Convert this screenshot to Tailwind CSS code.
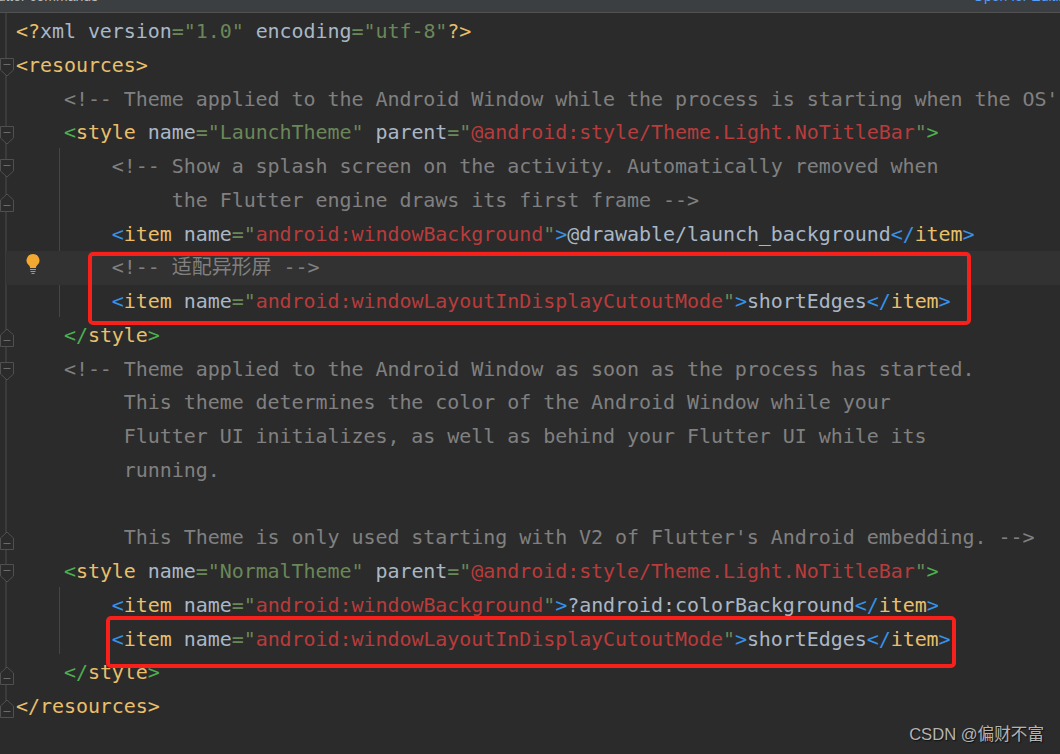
<!DOCTYPE html>
<html lang="en">
<head>
  <meta charset="UTF-8" />
  <title>styles.xml</title>
  <script src="https://cdn.jsdelivr.net/npm/@tailwindcss/browser@4"></script>
</head>
<body class="bg-[#2b2b2b] overflow-hidden">
  <svg class="hidden">
    <symbol id="fold-open" viewBox="0 0 14 19">
      <path d="M0.5 0.5H13.5V12L7 18L0.5 12Z" fill="#2b2b2b" stroke="#4f5052" />
      <path d="M3.5 6.5H10.5" stroke="#6a6b6d" />
    </symbol>
    <symbol id="fold-close" viewBox="0 0 14 19">
      <path d="M0.5 18.5H13.5V7L7 1L0.5 7Z" fill="#2b2b2b" stroke="#4f5052" />
      <path d="M3.5 12.5H10.5" stroke="#6a6b6d" />
    </symbol>
  </svg>

  <div class="relative h-[754px] w-[1060px] overflow-hidden">
    <!-- tool banner, cut off by the crop -->
    <div class="flex h-[13px] justify-between overflow-hidden border-b border-[#515151] bg-[#3c3f41] font-['Liberation_Sans',sans-serif] text-[14px] leading-[16px]">
      <span class="-mt-[12px] -ml-[14px] text-[#bbbbbb]">Flutter commands</span>
      <span class="-mt-[12px] w-[87px] whitespace-nowrap text-[#589df6]">Open for Editing</span>
    </div>

    <!-- fold gutter line + indent guides -->
    <div class="absolute top-[13px] left-[5px] h-[695px] w-[2px] bg-[#3a3b3d]"></div>
    <div class="absolute top-[148px] left-[59px] h-[169px] w-px bg-[#3d4a3d]"></div>
    <div class="absolute top-[587px] left-[59px] h-[67px] w-px bg-[#3d4a3d]"></div>

    <!-- editor -->
    <div class="relative flex flex-col pt-[2px] font-['DejaVu_Sans_Mono','Noto_Sans_CJK_SC',monospace] text-[20px] tracking-[-0.06px] whitespace-pre text-[#a9b7c6]">
      <div class="flex h-[33.75px] items-center leading-[33.75px]">
        <div class="w-4 shrink-0"></div>
        <div><span class="text-[#e8bf6a]">&lt;?</span>xml version<span class="text-[#6a8759]">="1.0"</span> encoding<span class="text-[#6a8759]">="utf-8"</span><span class="text-[#e8bf6a]">?&gt;</span></div>
      </div>
      <div class="flex h-[33.75px] items-center leading-[33.75px]">
        <div class="w-4 shrink-0"><svg class="mt-1 h-[19px] w-[14px]"><use href="#fold-open" /></svg></div>
        <div class="text-[#e8bf6a]">&lt;resources&gt;</div>
      </div>
      <div class="flex h-[33.75px] items-center leading-[33.75px]">
        <div class="w-4 shrink-0"></div>
        <div class="text-[#808080]">    &lt;!-- Theme applied to the Android Window while the process is starting when the OS'</div>
      </div>
      <div class="flex h-[33.75px] items-center leading-[33.75px]">
        <div class="w-4 shrink-0"><svg class="mt-1 h-[19px] w-[14px]"><use href="#fold-open" /></svg></div>
        <div>    <span class="text-[#4caf50]">&lt;</span><span class="text-[#e8bf6a]">style</span> name<span class="text-[#6a8759]">="LaunchTheme"</span> parent<span class="text-[#6a8759]">="</span><span class="text-[#b83c3c]">@android:style/Theme.Light.NoTitleBar</span><span class="text-[#6a8759]">"</span><span class="text-[#4caf50]">&gt;</span></div>
      </div>
      <div class="flex h-[33.75px] items-center leading-[33.75px]">
        <div class="w-4 shrink-0"><svg class="mt-1 h-[19px] w-[14px]"><use href="#fold-open" /></svg></div>
        <div class="text-[#808080]">        &lt;!-- Show a splash screen on the activity. Automatically removed when</div>
      </div>
      <div class="flex h-[33.75px] items-center leading-[33.75px]">
        <div class="w-4 shrink-0"><svg class="mt-1 h-[19px] w-[14px]"><use href="#fold-close" /></svg></div>
        <div class="text-[#808080]">             the Flutter engine draws its first frame --&gt;</div>
      </div>
      <div class="flex h-[33.75px] items-center leading-[33.75px]">
        <div class="w-4 shrink-0"></div>
        <div>        <span class="text-[#3592e8]">&lt;</span><span class="text-[#e8bf6a]">item</span> name<span class="text-[#6a8759]">="</span><span class="text-[#b83c3c]">android:windowBackground</span><span class="text-[#6a8759]">"</span><span class="text-[#3592e8]">&gt;</span>@drawable/launch_background<span class="text-[#3592e8]">&lt;/</span><span class="text-[#e8bf6a]">item</span><span class="text-[#3592e8]">&gt;</span></div>
      </div>
      <!-- caret line -->
      <div class="relative flex h-[33.75px] items-center leading-[33.75px]">
        <div class="w-[6px] shrink-0"></div>
        <div class="flex-1 bg-[#323232] pl-[10px] text-[#808080]">        &lt;!-- 适配异形屏 --&gt;</div>
        <svg class="absolute top-[2px] left-[26px] h-[22px] w-[14px]" viewBox="0 0 14 22">
          <path d="M7 1a6.5 6.5 0 0 0-4 11.6c.8.7 1 1.4 1 2.4h6c0-1 .2-1.7 1-2.4A6.5 6.5 0 0 0 7 1Z" fill="#f2a831" />
          <path d="M4 16.5h6M4.5 18.5h5M5.5 20.5h3" stroke="#9a9b9d" stroke-width="1.2" />
        </svg>
      </div>
      <div class="flex h-[33.75px] items-center leading-[33.75px]">
        <div class="w-4 shrink-0"></div>
        <div>        <span class="text-[#3592e8]">&lt;</span><span class="text-[#e8bf6a]">item</span> name<span class="text-[#6a8759]">="</span><span class="text-[#b83c3c]">android:windowLayoutInDisplayCutoutMode</span><span class="text-[#6a8759]">"</span><span class="text-[#3592e8]">&gt;</span>shortEdges<span class="text-[#3592e8]">&lt;/</span><span class="text-[#e8bf6a]">item</span><span class="text-[#3592e8]">&gt;</span></div>
      </div>
      <div class="flex h-[33.75px] items-center leading-[33.75px]">
        <div class="w-4 shrink-0"><svg class="mt-1 h-[19px] w-[14px]"><use href="#fold-close" /></svg></div>
        <div>    <span class="text-[#4caf50]">&lt;/</span><span class="text-[#e8bf6a]">style</span><span class="text-[#4caf50]">&gt;</span></div>
      </div>
      <div class="flex h-[33.75px] items-center leading-[33.75px]">
        <div class="w-4 shrink-0"><svg class="mt-1 h-[19px] w-[14px]"><use href="#fold-open" /></svg></div>
        <div class="text-[#808080]">    &lt;!-- Theme applied to the Android Window as soon as the process has started.</div>
      </div>
      <div class="flex h-[33.75px] items-center leading-[33.75px]">
        <div class="w-4 shrink-0"></div>
        <div class="text-[#808080]">         This theme determines the color of the Android Window while your</div>
      </div>
      <div class="flex h-[33.75px] items-center leading-[33.75px]">
        <div class="w-4 shrink-0"></div>
        <div class="text-[#808080]">         Flutter UI initializes, as well as behind your Flutter UI while its</div>
      </div>
      <div class="flex h-[33.75px] items-center leading-[33.75px]">
        <div class="w-4 shrink-0"></div>
        <div class="text-[#808080]">         running.</div>
      </div>
      <div class="h-[33.75px]"></div>
      <div class="flex h-[33.75px] items-center leading-[33.75px]">
        <div class="w-4 shrink-0"><svg class="mt-1 h-[19px] w-[14px]"><use href="#fold-close" /></svg></div>
        <div class="text-[#808080]">         This Theme is only used starting with V2 of Flutter's Android embedding. --&gt;</div>
      </div>
      <div class="flex h-[33.75px] items-center leading-[33.75px]">
        <div class="w-4 shrink-0"><svg class="mt-1 h-[19px] w-[14px]"><use href="#fold-open" /></svg></div>
        <div>    <span class="text-[#4caf50]">&lt;</span><span class="text-[#e8bf6a]">style</span> name<span class="text-[#6a8759]">="NormalTheme"</span> parent<span class="text-[#6a8759]">="</span><span class="text-[#b83c3c]">@android:style/Theme.Light.NoTitleBar</span><span class="text-[#6a8759]">"</span><span class="text-[#4caf50]">&gt;</span></div>
      </div>
      <div class="flex h-[33.75px] items-center leading-[33.75px]">
        <div class="w-4 shrink-0"></div>
        <div>        <span class="text-[#3592e8]">&lt;</span><span class="text-[#e8bf6a]">item</span> name<span class="text-[#6a8759]">="</span><span class="text-[#b83c3c]">android:windowBackground</span><span class="text-[#6a8759]">"</span><span class="text-[#3592e8]">&gt;</span>?android:colorBackground<span class="text-[#3592e8]">&lt;/</span><span class="text-[#e8bf6a]">item</span><span class="text-[#3592e8]">&gt;</span></div>
      </div>
      <div class="flex h-[33.75px] items-center leading-[33.75px]">
        <div class="w-4 shrink-0"></div>
        <div>        <span class="text-[#3592e8]">&lt;</span><span class="text-[#e8bf6a]">item</span> name<span class="text-[#6a8759]">="</span><span class="text-[#b83c3c]">android:windowLayoutInDisplayCutoutMode</span><span class="text-[#6a8759]">"</span><span class="text-[#3592e8]">&gt;</span>shortEdges<span class="text-[#3592e8]">&lt;/</span><span class="text-[#e8bf6a]">item</span><span class="text-[#3592e8]">&gt;</span></div>
      </div>
      <div class="flex h-[33.75px] items-center leading-[33.75px]">
        <div class="w-4 shrink-0"><svg class="mt-1 h-[19px] w-[14px]"><use href="#fold-close" /></svg></div>
        <div>    <span class="text-[#4caf50]">&lt;/</span><span class="text-[#e8bf6a]">style</span><span class="text-[#4caf50]">&gt;</span></div>
      </div>
      <div class="flex h-[33.75px] items-center leading-[33.75px]">
        <div class="w-4 shrink-0"><svg class="mt-1 h-[19px] w-[14px]"><use href="#fold-close" /></svg></div>
        <div class="text-[#e8bf6a]">&lt;/resources&gt;</div>
      </div>
    </div>

    <!-- red annotation boxes -->
    <div class="absolute top-[252px] left-[88px] h-[73px] w-[883px] rounded-[5px] border-4 border-[#f8201a]"></div>
    <div class="absolute top-[616px] left-[106px] h-[52px] w-[850px] rounded-[5px] border-4 border-[#f8201a]"></div>

    <!-- watermark -->
    <div class="absolute top-[725px] right-[16px] font-['Liberation_Sans','Noto_Sans_CJK_SC',sans-serif] text-[16.6px] leading-[20px] text-[#b4b4b4] [text-shadow:1px_1px_1px_#111]">CSDN @偏财不富</div>
  </div>
</body>
</html>
